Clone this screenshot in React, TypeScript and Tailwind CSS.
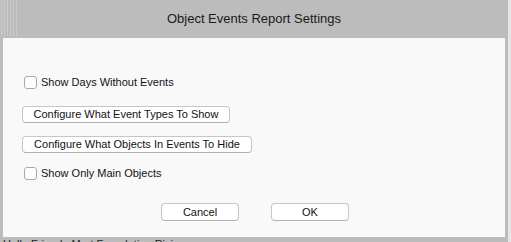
const font = { fontFamily: '"Liberation Sans", Arial, sans-serif' }

function Checkbox({ label }: { label: string }) {
  return (
    <div className="flex items-center gap-[4px] ml-[21px] h-[13px]">
      <div className="w-[13px] h-[13px] rounded-[3px] border border-[#a9a9a9] bg-white" />
      <span className="text-[11px] leading-none text-[#111]">{label}</span>
    </div>
  )
}

function Button({ label, className }: { label: string; className: string }) {
  return (
    <button
      className={`${className} rounded-[4px] border border-[#c6c6c6] border-b-[#b0b0b0] bg-white text-[11px] leading-none text-[#111] flex items-center justify-center`}
    >
      {label}
    </button>
  )
}

export default function App() {
  return (
    <div style={font} className="w-[511px] h-[242px] bg-[#bcbcbc] flex overflow-hidden">
      <div className="w-[508px] flex flex-col">
        {/* title bar */}
        <div className="relative h-[38px] flex items-center justify-center">
          <div className="absolute left-[1px] top-0 h-[36px] flex gap-[2px]">
            {[0, 1, 2, 3, 4, 5].map((i) => (
              <div key={i} className="w-[1px] h-full bg-[#cbcbcb]" />
            ))}
          </div>
          <span className="text-[13px] leading-none text-[#1a1a1a] pb-[1px]">Object Events Report Settings</span>
        </div>

        {/* content panel */}
        <div className="ml-[3px] w-[502px] h-[199px] bg-[#f9f9f9] flex flex-col">
          <div className="mt-[38px]">
            <Checkbox label="Show Days Without Events" />
          </div>
          <Button label="Configure What Event Types To Show" className="ml-[19px] mt-[17px] w-[208px] h-[17px]" />
          <Button label="Configure What Objects In Events To Hide" className="ml-[19px] mt-[13px] w-[230px] h-[17px]" />
          <div className="mt-[14px]">
            <Checkbox label="Show Only Main Objects" />
          </div>
          <div className="mt-[23px] pl-[158px] flex gap-[32px]">
            <Button label="Cancel" className="w-[78px] h-[18px]" />
            <Button label="OK" className="w-[78px] h-[18px]" />
          </div>
        </div>

        <div className="h-[3px]" />
        {/* sliver of the window underneath */}
        <div className="h-[2px] overflow-hidden pl-[3px]">
          <div className="text-[11px] leading-[11px] text-[#222] whitespace-nowrap -mt-[1px]">
            Hello Friend , Mort Foundation Rising
          </div>
        </div>
      </div>
      <div className="w-[3px] bg-[#e6e6e6]" />
    </div>
  )
}
